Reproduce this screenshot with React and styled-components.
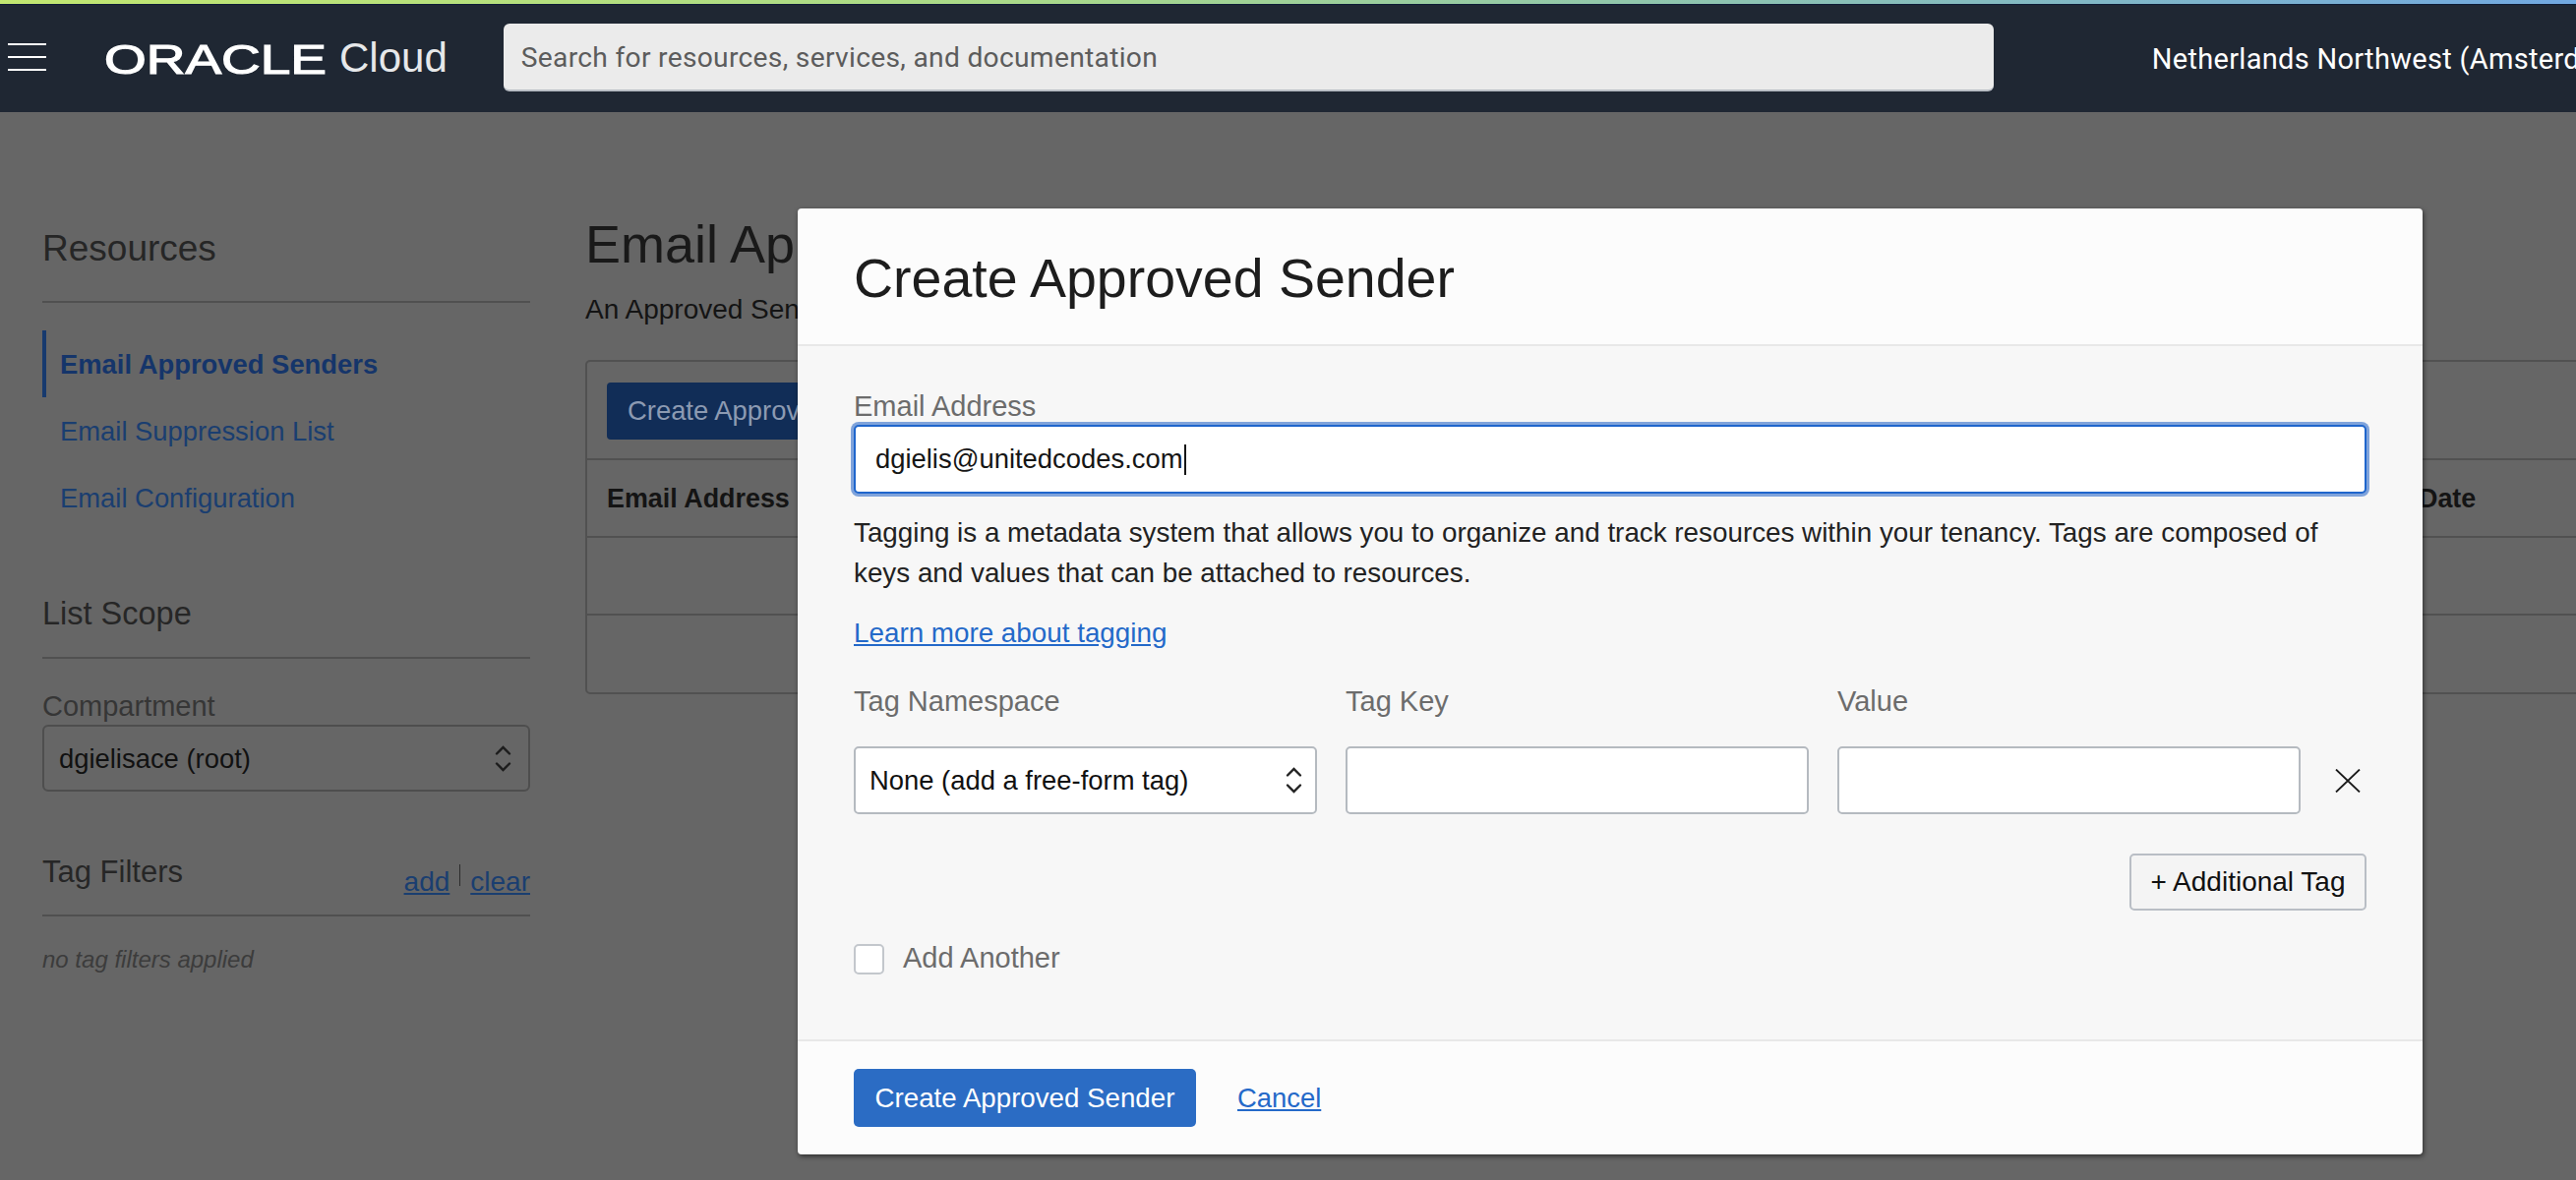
import React from "react";
import styled, { createGlobalStyle } from "styled-components";

const GlobalStyle = createGlobalStyle`
  html, body {
    margin: 0;
    padding: 0;
    height: 100%;
    overflow: hidden;
    background: #666666;
  }
  * {
    box-sizing: border-box;
  }
  body {
    font-family: "Liberation Sans", Arial, sans-serif;
    font-size: 27.4px;
    color: #161616;
  }
`;

const Shell = styled.div`
  position: relative;
  width: 2619px;
  height: 1200px;
  overflow: hidden;
  background: #666666;
`;

const TopStrip = styled.div`
  height: 5px;
  background: linear-gradient(90deg, #c2e771 0%, #a9d98a 40%, #8fc5ae 65%, #71a8e2 100%);
  border-bottom: 1px solid #0e1c36;
`;

const Header = styled.header`
  display: flex;
  align-items: center;
  height: 109px;
  padding: 0 0 3px 8px;
  background: #1f2733;
  overflow: hidden;
  white-space: nowrap;
`;

const Logo = styled.svg`
  display: block;
  flex: none;
  margin: 3px 0 0 59px;
`;

const LogoCloud = styled.span`
  flex: none;
  margin: 1px 0 0 13px;
  color: #e6e8ea;
  font-size: 42px;
  line-height: 44px;
`;

const SearchBox = styled.div`
  flex: none;
  display: flex;
  align-items: center;
  width: 1515px;
  height: 69px;
  margin-left: 57px;
  padding: 2px 0 0 18px;
  background: #ebebeb;
  border-bottom: 2px solid #b9bec5;
  border-radius: 6px;
  color: #5c5c5c;
  font-family: Roboto, "Liberation Sans", sans-serif;
  font-size: 28.2px;
  letter-spacing: 0.3px;
`;

const RegionName = styled.span`
  flex: none;
  margin: 3px 0 0 161px;
  color: #ffffff;
  font-family: Roboto, "Liberation Sans", sans-serif;
  font-size: 29px;
  letter-spacing: 0.3px;
`;

const Content = styled.div`
  display: flex;
  gap: 56px;
  padding-left: 43px;
`;

const Sidebar = styled.aside`
  flex: none;
  width: 496px;
`;

const SectionTitle = styled.div`
  display: flex;
  justify-content: space-between;
  align-items: flex-start;
  height: ${(p) => p.$height}px;
  margin-top: ${(p) => p.$top}px;
  border-bottom: 2px solid #505050;
  color: #262626;
  font-size: ${(p) => p.$size}px;
  line-height: 44px;
`;

const SideNav = styled.nav`
  margin-top: 28px;
`;

const NavItem = styled.div`
  display: flex;
  align-items: center;
  height: 68px;
  padding: 2px 0 0 14px;
  border-left: 4px solid ${(p) => (p.$active ? "#173a6e" : "transparent")};
  color: ${(p) => (p.$active ? "#15356a" : "#1a3e70")};
  font-weight: ${(p) => (p.$active ? 700 : 400)};
`;

const ScopeLabel = styled.div`
  margin-top: 30px;
  color: #363636;
  font-size: 29px;
  line-height: 36px;
`;

const ScopeSelect = styled.div`
  display: flex;
  align-items: center;
  justify-content: space-between;
  height: 68px;
  margin-top: 1px;
  padding: 0 17px 0 15px;
  border: 2px solid #4e4e4e;
  border-radius: 6px;
  color: #111111;

  & > span {
    padding-top: 2px;
  }
`;

const TagLinks = styled.div`
  display: flex;
  align-items: center;
  gap: 10px;
  margin-top: 14px;
  font-size: 28px;
  line-height: 36px;
`;

const SideLink = styled.a`
  color: #1a3e70;
  text-decoration: underline;
`;

const LinkDivider = styled.span`
  width: 1px;
  height: 22px;
  margin-top: -14px;
  background: #2c2c2c;
`;

const NoFilters = styled.div`
  margin-top: 29px;
  color: #3c3c3c;
  font-size: 24px;
  font-style: italic;
  line-height: 30px;
`;

const Main = styled.main`
  flex: 1;
  min-width: 0;
  margin-right: -40px;
`;

const PageTitle = styled.h1`
  margin: 102px 0 0;
  color: #191919;
  font-size: 54px;
  font-weight: 400;
  line-height: 64px;
`;

const PageIntro = styled.p`
  margin: 17px 0 0;
  color: #141414;
  font-size: 28px;
  line-height: 36px;
`;

const TablePanel = styled.section`
  margin-top: 33px;
  border: 2px solid #515151;
  border-radius: 5px;
`;

const TableToolbar = styled.div`
  display: flex;
  align-items: center;
  height: 98px;
  padding: 2px 0 0 20px;
`;

const DimButton = styled.div`
  display: flex;
  align-items: center;
  height: 58px;
  padding: 0 21px;
  background: #112d57;
  border-radius: 4px;
  color: #8c9ab2;
`;

const TableRow = styled.div`
  display: grid;
  grid-template-columns: 1842px 1fr;
  align-items: center;
  height: ${(p) => p.$height}px;
  padding: 2px 0 0 20px;
  border-top: 2px solid #515151;
  color: #141414;
  font-size: 26.9px;
  font-weight: 700;
`;

const Backdrop = styled.div`
  position: absolute;
  top: 212px;
  left: 811px;
`;

const Modal = styled.div`
  display: flex;
  flex-direction: column;
  width: 1652px;
  height: 962px;
  background: #fcfcfc;
  border-radius: 4px;
  box-shadow: 1px 2px 5px rgba(0, 0, 0, 0.55);
`;

const ModalHeader = styled.div`
  display: flex;
  align-items: center;
  height: 140px;
  padding: 0 57px;
  border-bottom: 2px solid #e8e8e8;
`;

const ModalTitle = styled.h2`
  margin: 3px 0 0;
  color: #1d1d1d;
  font-size: 55.5px;
  font-weight: 400;
`;

const ModalBody = styled.div`
  flex: 1;
  padding: 43px 57px 0 57px;
  background: #f7f7f7;
`;

const FieldLabel = styled.label`
  display: block;
  color: #6c6c6c;
  font-size: 29px;
  line-height: 36px;
`;

const EmailField = styled.div`
  display: flex;
  align-items: center;
  height: 70px;
  margin-top: 1px;
  padding-left: 20px;
  background: #ffffff;
  border: 2px solid #1f66cc;
  border-radius: 5px;
  box-shadow: 0 0 0 3px #7fa3db;
  color: #161616;
`;

const Caret = styled.span`
  width: 2px;
  height: 31px;
  margin-left: 1px;
  background: #161616;
`;

const HelpText = styled.p`
  margin: 19px 0 0;
  color: #222222;
  font-size: 27.8px;
  line-height: 41px;
`;

const BlueLink = styled.a`
  color: #2469c9;
  text-decoration: underline;
`;

const LearnMore = styled.div`
  margin-top: 20px;
  font-size: 27.8px;
  line-height: 41px;
`;

const TagGrid = styled.div`
  display: grid;
  grid-template-columns: 471px 471px 471px 1fr;
  column-gap: 29px;
  row-gap: 28px;
  margin-top: 31px;
  align-items: center;
`;

const SelectBox = styled.div`
  display: flex;
  align-items: center;
  justify-content: space-between;
  height: 69px;
  padding: 0 13px 0 14px;
  background: #ffffff;
  border: 2px solid #b5bac0;
  border-radius: 5px;
  color: #111111;
`;

const TextBox = styled.input`
  display: block;
  width: 100%;
  height: 69px;
  background: #ffffff;
  border: 2px solid #b5bac0;
  border-radius: 5px;
  outline: none;
`;

const RemoveIcon = styled.svg`
  display: block;
  justify-self: center;
`;

const TagActions = styled.div`
  display: flex;
  justify-content: flex-end;
  margin-top: 40px;
`;

const OutlineButton = styled.button`
  width: 241px;
  height: 58px;
  padding: 0;
  background: #f4f4f4;
  border: 2px solid #b9bec5;
  border-radius: 5px;
  color: #111111;
  font-family: inherit;
  font-size: 28px;
`;

const AddAnotherRow = styled.div`
  display: flex;
  align-items: center;
  gap: 19px;
  margin-top: 34px;
`;

const CheckBox = styled.span`
  width: 31px;
  height: 31px;
  background: #ffffff;
  border: 2px solid #c3c7cc;
  border-radius: 5px;
`;

const CheckLabel = styled.span`
  margin-top: -3px;
  color: #6c6c6c;
  font-size: 29px;
`;

const ModalFooter = styled.div`
  display: flex;
  align-items: center;
  gap: 42px;
  height: 117px;
  padding: 0 0 0 57px;
  border-top: 2px solid #e8e8e8;
`;

const PrimaryButton = styled.button`
  height: 59px;
  width: 348px;
  padding: 0;
  background: #2b6cc4;
  border: none;
  border-radius: 5px;
  color: #ffffff;
  font-family: inherit;
  font-size: 27.7px;
`;

const Chevrons = ({ color }) => (
  <svg width="17" height="27" viewBox="0 0 17 27" fill="none" stroke={color} strokeWidth="2.4" strokeLinecap="round">
    <path d="M2 8.5 L8.5 2 L15 8.5" />
    <path d="M2 18.5 L8.5 25 L15 18.5" />
  </svg>
);

export default function App() {
  return (
    <Shell>
      <GlobalStyle />
      <TopStrip />
      <Header>
        <svg width="39" height="30" viewBox="0 0 39 30" stroke="#ffffff" strokeWidth="2" style={{ flex: "none" }}>
          <line x1="0" y1="2" x2="39" y2="2" />
          <line x1="0" y1="15" x2="39" y2="15" />
          <line x1="0" y1="28" x2="39" y2="28" />
        </svg>
        <Logo width="226" height="32" viewBox="0 0 226 32">
          <text
            x="0"
            y="31"
            fontFamily="Liberation Sans, sans-serif"
            fontSize="42"
            fill="#ffffff"
            stroke="#ffffff"
            strokeWidth="1.2"
            textLength="226"
            lengthAdjust="spacingAndGlyphs"
          >
            ORACLE
          </text>
        </Logo>
        <LogoCloud>Cloud</LogoCloud>
        <SearchBox>Search for resources, services, and documentation</SearchBox>
        <RegionName>Netherlands Northwest (Amsterdam)</RegionName>
      </Header>

      <Content>
        <Sidebar>
          <SectionTitle $top={117} $height={77} $size={37}>Resources</SectionTitle>
          <SideNav>
            <NavItem $active>Email Approved Senders</NavItem>
            <NavItem>Email Suppression List</NavItem>
            <NavItem>Email Configuration</NavItem>
          </SideNav>

          <SectionTitle $top={62} $height={68} $size={32.5}>List Scope</SectionTitle>
          <ScopeLabel>Compartment</ScopeLabel>
          <ScopeSelect>
            <span>dgielisace (root)</span>
            <Chevrons color="#1c1c1c" />
          </ScopeSelect>

          <SectionTitle $top={60} $height={67} $size={31}>
            Tag Filters
            <TagLinks>
              <SideLink>add</SideLink>
              <LinkDivider />
              <SideLink>clear</SideLink>
            </TagLinks>
          </SectionTitle>
          <NoFilters>no tag filters applied</NoFilters>
        </Sidebar>

        <Main>
          <PageTitle>Email Approved Senders</PageTitle>
          <PageIntro>An Approved Sender is an email address</PageIntro>
          <TablePanel>
            <TableToolbar>
              <DimButton>Create Approved Sender</DimButton>
            </TableToolbar>
            <TableRow $height={79}>
              <span>Email Address</span>
              <span>Date</span>
            </TableRow>
            <TableRow $height={79} />
            <TableRow $height={80} />
          </TablePanel>
        </Main>
      </Content>

      <Backdrop>
        <Modal>
          <ModalHeader>
            <ModalTitle>Create Approved Sender</ModalTitle>
          </ModalHeader>
          <ModalBody>
            <FieldLabel>Email Address</FieldLabel>
            <EmailField>
              dgielis@unitedcodes.com
              <Caret />
            </EmailField>
            <HelpText>
              Tagging is a metadata system that allows you to organize and track resources within your tenancy. Tags are composed of
              <br />
              keys and values that can be attached to resources.
            </HelpText>
            <LearnMore>
              <BlueLink>Learn more about tagging</BlueLink>
            </LearnMore>
            <TagGrid>
              <FieldLabel>Tag Namespace</FieldLabel>
              <FieldLabel>Tag Key</FieldLabel>
              <FieldLabel>Value</FieldLabel>
              <span />
              <SelectBox>
                None (add a free-form tag)
                <Chevrons color="#222222" />
              </SelectBox>
              <TextBox readOnly />
              <TextBox readOnly />
              <RemoveIcon width="26" height="24" viewBox="0 0 26 24" stroke="#1a1a1a" strokeWidth="1.8" fill="none">
                <path d="M1 0.5 L25 23.5 M25 0.5 L1 23.5" />
              </RemoveIcon>
            </TagGrid>
            <TagActions>
              <OutlineButton>+ Additional Tag</OutlineButton>
            </TagActions>
            <AddAnotherRow>
              <CheckBox />
              <CheckLabel>Add Another</CheckLabel>
            </AddAnotherRow>
          </ModalBody>
          <ModalFooter>
            <PrimaryButton>Create Approved Sender</PrimaryButton>
            <BlueLink>Cancel</BlueLink>
          </ModalFooter>
        </Modal>
      </Backdrop>
    </Shell>
  );
}
